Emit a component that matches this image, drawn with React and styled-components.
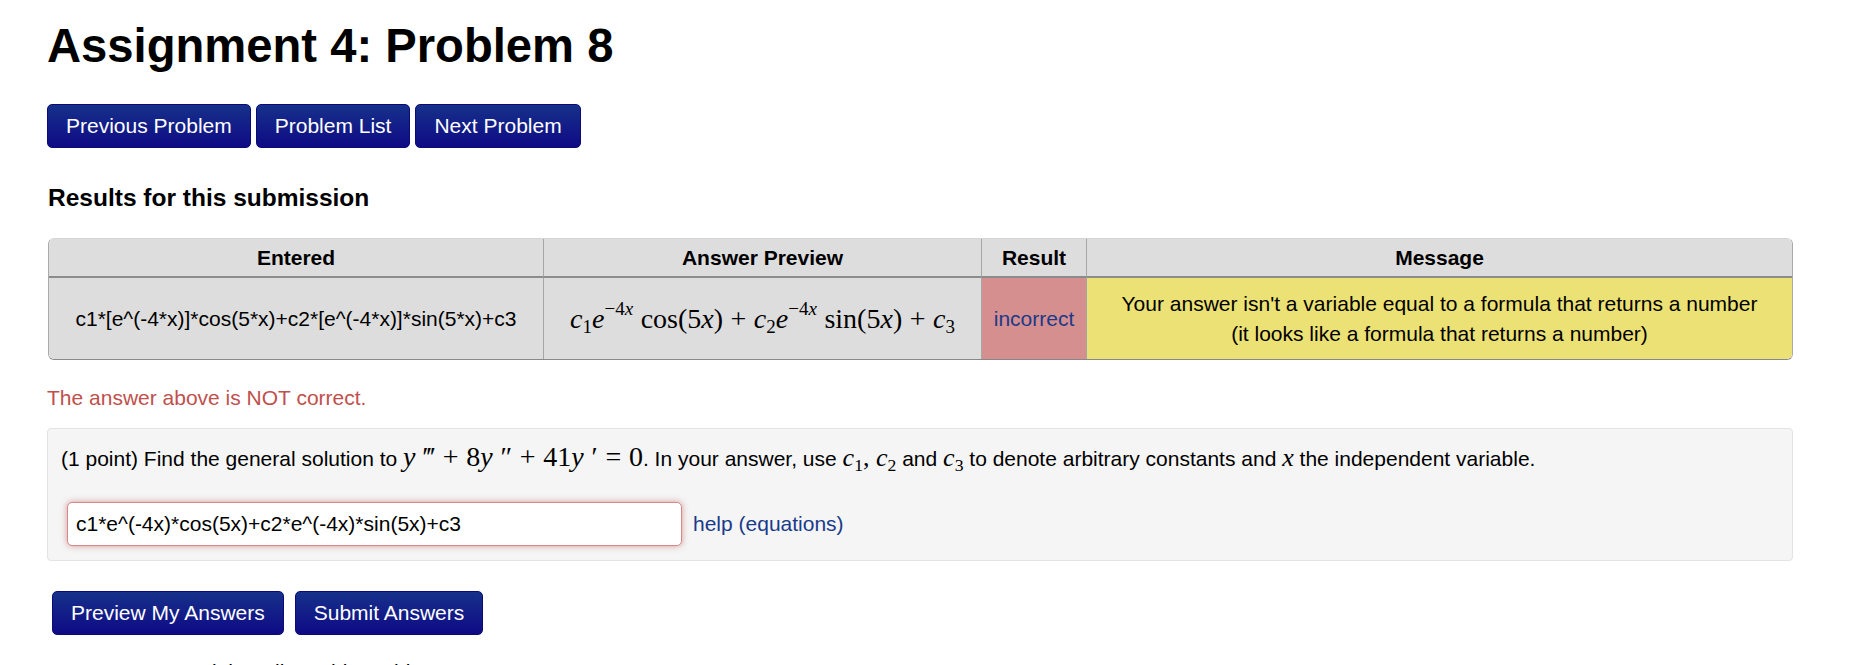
import React from "react";
import styled, { createGlobalStyle } from "styled-components";

const GlobalStyle = createGlobalStyle`
  html, body {
    margin: 0;
    padding: 0;
    background: #fff;
    overflow: hidden;
  }
  body {
    font-family: "Liberation Sans", Arial, sans-serif;
    font-size: 21px;
    color: #000;
  }
`;

const Page = styled.div`
  height: 665px;
  overflow: hidden;
  padding: 0 79px 0 47px;
`;

const Title = styled.h1`
  margin: 0;
  padding-top: 18px;
  font-size: 47.2px;
  line-height: 55px;
  font-weight: 700;
`;

const NavRow = styled.div`
  display: flex;
  gap: ${(p) => p.$gap || 5}px;
  margin-top: ${(p) => p.$top || 31}px;
  margin-left: ${(p) => p.$indent || 0}px;
`;

const NavButton = styled.button`
  height: 44px;
  padding: 0 18px;
  border: 1px solid #0b0b73;
  border-radius: 5px;
  background: linear-gradient(#16318a, #0f0a85);
  color: #fff;
  font-family: inherit;
  font-size: 21px;
`;

const SectionTitle = styled.h2`
  margin: 34px 0 0 1px;
  font-size: 24.5px;
  line-height: 32px;
  font-weight: 700;
`;

const ResultsTable = styled.div`
  display: grid;
  grid-template-columns: 494px 438px 105px 1fr;
  grid-template-rows: 39px 81px;
  margin: 24px 0 0 1px;
  border: 1px solid #d4d4d4;
  border-bottom-color: #888;
  border-right-color: #aaa;
  border-left-color: #aaa;
  border-radius: 6px;
  overflow: hidden;
  background: #fff;
`;

const HeadCell = styled.div`
  display: flex;
  align-items: center;
  justify-content: center;
  background: #ddd;
  border-bottom: 2px solid #8c8c8c;
  font-weight: 700;
  font-size: 21px;

  & + & {
    border-left: 1px solid #a6a6a6;
  }
`;

const Cell = styled.div`
  display: flex;
  align-items: center;
  justify-content: center;
  text-align: center;
  background: ${(p) => p.$bg || "#ddd"};
  color: ${(p) => p.$color || "#000"};
  line-height: 30px;
  font-size: 21px;

  & + & {
    border-left: 1px solid #a6a6a6;
  }
`;

const MathText = styled.span`
  font-family: "Liberation Serif", "Times New Roman", serif;
  font-size: ${(p) => p.$size || 28}px;
  word-spacing: ${(p) => p.$spread || 0}px;
  white-space: pre;
  i { font-style: italic; }
  sub { font-size: 68%; vertical-align: -5px; line-height: 0; }
  sup { font-size: 68%; vertical-align: 13px; line-height: 0; }
`;

const Status = styled.p`
  margin: 23px 0 0;
  font-size: 21px;
  line-height: 30px;
  color: #c0504d;
`;

const Well = styled.div`
  margin-top: 15px;
  height: 133px;
  box-sizing: border-box;
  padding: 13px 13px;
  background: #f5f5f5;
  border: 1px solid #e3e3e3;
  border-radius: 4px;
`;

const Question = styled.div`
  line-height: 30px;
`;

const AnswerRow = styled.div`
  display: flex;
  align-items: center;
  gap: 11px;
  margin: 28px 0 0 6px;
`;

const AnswerInput = styled.input`
  box-sizing: border-box;
  width: 615px;
  height: 44px;
  padding: 0 8px;
  border: 1px solid #d58a8a;
  border-radius: 5px;
  box-shadow: 0 0 6px rgba(185, 74, 72, 0.55);
  background: #fff;
  font-family: inherit;
  font-size: 21px;
  color: #000;
`;

const HelpLink = styled.a`
  color: #1a3a8a;
  font-size: 21px;
`;

const Attempts = styled.p`
  margin: 25px 0 0;
  line-height: 24px;
`;

export default function App() {
  return (
    <>
      <GlobalStyle />
      <Page>
        <Title>Assignment 4: Problem 8</Title>
        <NavRow>
          <NavButton>Previous Problem</NavButton>
          <NavButton>Problem List</NavButton>
          <NavButton>Next Problem</NavButton>
        </NavRow>
        <SectionTitle>Results for this submission</SectionTitle>
        <ResultsTable>
          <HeadCell>Entered</HeadCell>
          <HeadCell>Answer Preview</HeadCell>
          <HeadCell>Result</HeadCell>
          <HeadCell>Message</HeadCell>
          <Cell>c1*[e^(-4*x)]*cos(5*x)+c2*[e^(-4*x)]*sin(5*x)+c3</Cell>
          <Cell>
            <MathText $spread={0.5}>
              <i>c</i><sub>1</sub><i>e</i><sup>−4<i>x</i></sup> cos(5<i>x</i>) + <i>c</i><sub>2</sub><i>e</i><sup>−4<i>x</i></sup> sin(5<i>x</i>) + <i>c</i><sub>3</sub>
            </MathText>
          </Cell>
          <Cell $bg="#d68f8f" $color="#1a3a8a">incorrect</Cell>
          <Cell $bg="#ece175">
            Your answer isn't a variable equal to a formula that returns a number
            <br />
            (it looks like a formula that returns a number)
          </Cell>
        </ResultsTable>
        <Status>The answer above is NOT correct.</Status>
        <Well>
          <Question>
            (1 point) Find the general solution to{" "}
            <MathText $spread={0.75}><i>y</i> ‴ + 8<i>y</i> ″ + 41<i>y</i> ′ = 0</MathText>. In your answer, use{" "}
            <MathText $size={26}><i>c</i><sub>1</sub>, <i>c</i><sub>2</sub></MathText> and{" "}
            <MathText $size={26}><i>c</i><sub>3</sub></MathText> to denote arbitrary constants and{" "}
            <MathText $size={26}><i>x</i></MathText> the independent variable.
          </Question>
          <AnswerRow>
            <AnswerInput defaultValue="c1*e^(-4x)*cos(5x)+c2*e^(-4x)*sin(5x)+c3" />
            <HelpLink>help (equations)</HelpLink>
          </AnswerRow>
        </Well>
        <NavRow $indent={5} $gap={11} $top={30}>
          <NavButton>Preview My Answers</NavButton>
          <NavButton>Submit Answers</NavButton>
        </NavRow>
        <Attempts>You can earn partial credit on this problem.</Attempts>
      </Page>
    </>
  );
}
